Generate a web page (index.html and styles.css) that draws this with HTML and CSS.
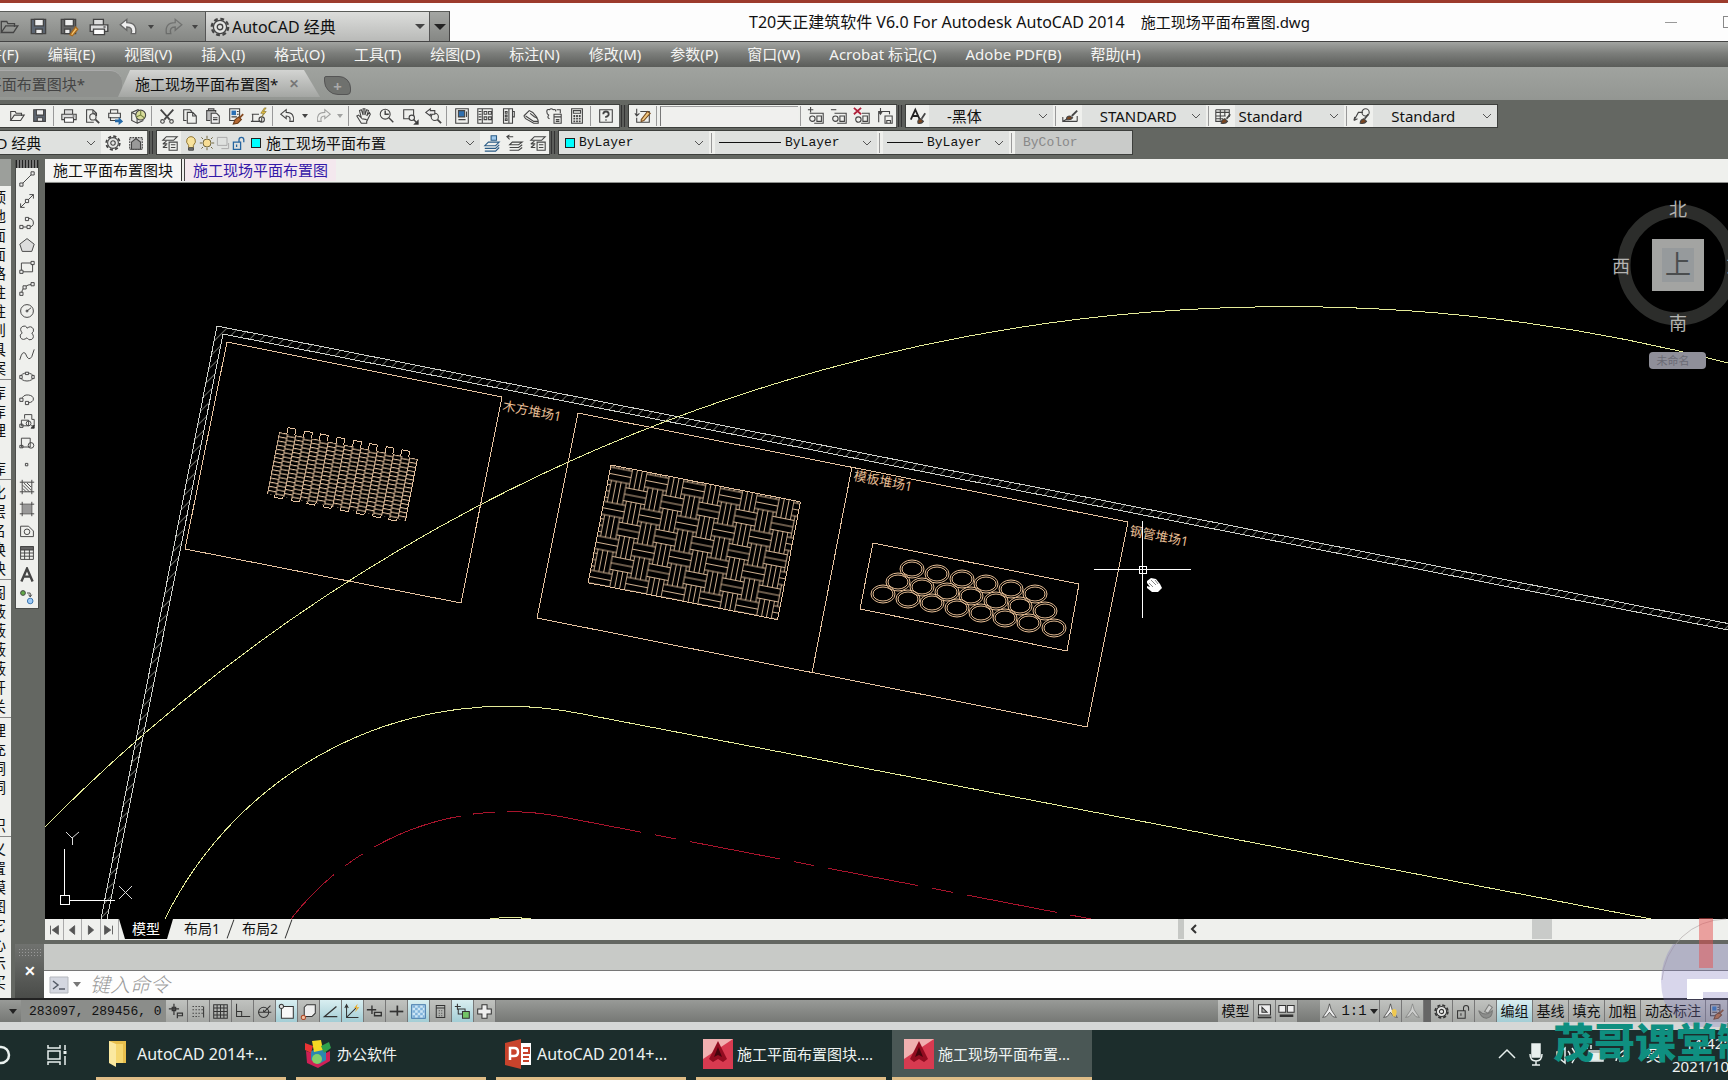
FILE: index.html
```html
<!DOCTYPE html>
<html lang="zh-CN">
<head>
<meta charset="utf-8">
<title>T20天正建筑软件 V6.0 For Autodesk AutoCAD 2014</title>
<link rel="stylesheet" href="styles.css">
</head>
<body>
<svg class="defs" aria-hidden="true">
  <symbol id="new" viewBox="0 0 20 20"><path d="M5 3h7l4 4v10H5zM12 3v4h4"/></symbol>
  <symbol id="open" viewBox="0 0 20 20"><path d="M3 15V5h5l1 2h6v3M3 15l4-6h11l-4 6z"/></symbol>
  <symbol id="save" viewBox="0 0 20 20"><path d="M3 3h13v13H3z" fill="#5d6672"/><path d="M6 3h8v6H6zM7 12h6v4H7z" fill="#eee"/></symbol>
  <symbol id="saveas" viewBox="0 0 20 20"><path d="M3 3h13v13H3z" fill="#666"/><path d="M6 3h8v6H6zM6 12h5v4H6z" fill="#eee"/><path d="M11 17l5-7 2 2-5 6z" fill="#f5c26b" stroke="#a66a20"/></symbol>
  <symbol id="print" viewBox="0 0 20 20"><path d="M5 8V3h9v5M2 8h16v6H2z" fill="#ddd"/><path d="M5 12h10v5H5z" fill="#fff"/><path d="M14 10h2"/></symbol>
  <symbol id="preview" viewBox="0 0 20 20"><path d="M12 17H4V3h7l4 4v3M11 3v4h4"/><circle cx="11" cy="11" r="3.5"/><path d="M14 14l4 4" stroke-width="2"/></symbol>
  <symbol id="publish" viewBox="0 0 20 20"><path d="M5 7V3h8v4M3 7h13v5H3zM5 11v4h5"/><path d="M10 14h4v-3l5 5-5 4v-3h-4z" fill="#2469a8" stroke="none"/></symbol>
  <symbol id="cube" viewBox="0 0 20 20"><path d="M3 6l7-3 3 2M3 6l6 3v9l-6-3zM9 18l7-3"/><circle cx="13" cy="9" r="5.5" fill="#d9dc9b"/><path d="M13 4v5l4 3M13 9l-5 2" stroke="#74843e"/></symbol>
  <symbol id="cut" viewBox="0 0 20 20"><path d="M3 3l10 11M17 3L7 14" stroke-width="2"/><circle cx="5" cy="16" r="2"/><circle cx="15" cy="16" r="2"/></symbol>
  <symbol id="copy" viewBox="0 0 20 20"><path d="M6 15H3V3h7l2 2M7 6h6l4 4v8H7zM13 6v4h4"/></symbol>
  <symbol id="paste" viewBox="0 0 20 20"><path d="M7 15H3V4h10v2M5 4V2h6v2" fill="#bbb"/><path d="M8 7h6l3 3v8H8z" fill="#eee"/><path d="M10 12h5M10 14h5"/></symbol>
  <symbol id="match" viewBox="0 0 20 20"><path d="M3 2h11v13H3z"/><path d="M5 4h5v5H5z" fill="#2a70b5" stroke="none"/><path d="M11 5h2M11 8h2M5 11h6"/><path d="M9 14l4-3 3 3-4 4-5 1z" fill="#b56832" stroke="#6b3c18"/><path d="M14 12l4-4" stroke="#854a20" stroke-width="2"/></symbol>
  <symbol id="blocked" viewBox="0 0 20 20"><path d="M2 8h8M3 8v8h10v-4M1 16h5"/><circle cx="13" cy="14" r="3"/><path d="M16 1l-4 6h3l-2 4 5-6h-3l3-4z" fill="#e8c33f" stroke="#7a6b28" stroke-width=".7"/></symbol>
  <symbol id="undo" viewBox="0 0 20 20"><path d="M2 8l6-5v3c7 0 9 4 8 10h-4c1-4 0-6-4-6v3z"/></symbol>
  <symbol id="redo" viewBox="0 0 20 20"><path d="M18 8l-6-5v3C5 6 3 10 4 16h4c-1-4 0-6 4-6v3z"/></symbol>
  <symbol id="pan" viewBox="0 0 20 20"><path d="M7 18L2 10l2-1 3 3L5 4l2-1 2 6V2h2v7l2-6 2 1-2 6 3-4 1 2-4 8v2zM8 13l5 1"/></symbol>
  <symbol id="zoom" viewBox="0 0 20 20"><circle cx="8" cy="8" r="5.500"/><path d="M8 4v4h4M12 12l5 5" stroke-width="1.600"/></symbol>
  <symbol id="zoomwin" viewBox="0 0 20 20"><path d="M9 13H3V3h11v7"/><circle cx="12" cy="12" r="3"/><path d="M14 14l3 3" stroke-width="1.600"/><path d="M19 15v4h-4z" fill="#222"/></symbol>
  <symbol id="zoomprev" viewBox="0 0 20 20"><circle cx="12" cy="11" r="4"/><path d="M15 14l4 4" stroke-width="2"/><path d="M2 6l5-4v2h5v4H7v2z" fill="#eee"/></symbol>
  <symbol id="props" viewBox="0 0 20 20"><path d="M3 2h14v16H3z"/><path d="M6 4h7v7H6z" fill="#2f6fae"/><path d="M6 14h8M15 5v6"/></symbol>
  <symbol id="center" viewBox="0 0 20 20"><path d="M2 2h16v16H2zM7 2v16M9 5h3v3H9zM14 5h3v3h-3zM9 11h3v3H9zM14 11h3v3h-3zM3 5h3M3 8h3M3 11h3M3 14h3"/></symbol>
  <symbol id="toolpal" viewBox="0 0 20 20"><path d="M5 2h10v16H5zM11 2v16M7 5h2v2H7zM7 9h2v2H7zM7 13h2v2H7zM15 5h2v6h-2"/></symbol>
  <symbol id="sheets" viewBox="0 0 20 20"><path d="M2 10l6-6 4 2 5 6M4 10l9 6h5q0-4-4-5l-5-4M2 10l2 3 9 5h5v-2"/></symbol>
  <symbol id="markup" viewBox="0 0 20 20"><path d="M2 5q0-3 3-2 2-2 4 0 3-1 3 2M2 5q0 3 2 4-2 3 1 4M10 8h8v10h-8zM10 11h8M12 14h4M12 16h4M13 3h4v4"/></symbol>
  <symbol id="calc" viewBox="0 0 20 20"><path d="M4 2h12v16H4zM6 4h8v3H6z"/><path d="M6 10h8M6 13h8M6 16h8" stroke-dasharray="2 1" stroke-width="2"/></symbol>
  <symbol id="help" viewBox="0 0 20 20"><path d="M3 3h14v14H3z"/><path d="M7 8q0-3 3-3t3 3q0 2-3 3v1M10 14v1" stroke-width="2"/></symbol>
  <symbol id="edit" viewBox="0 0 20 20"><path d="M3 2v8M1 7l2 3 3-3M7 5h10v12H3v-5"/><path d="M8 14l7-9 3 2-7 8-3 1z" fill="#f1c77c" stroke="#774b20"/></symbol>
  <symbol id="gplus" viewBox="0 0 20 20"><path d="M1 3h6M4 0v6"/><circle cx="6" cy="13" r="3"/><path d="M3 7h15v11H8M11 10h5v6h-5z"/></symbol>
  <symbol id="gminus" viewBox="0 0 20 20"><path d="M1 3h6"/><circle cx="6" cy="13" r="3"/><path d="M5 7h13v11H8M11 10h5v6h-5z"/></symbol>
  <symbol id="gdel" viewBox="0 0 20 20"><path d="M1 1l8 7M9 1L1 8" stroke="#b0203a" stroke-width="2"/><circle cx="6" cy="14" r="3"/><path d="M10 7h8v11H9M11 10h5v6h-5z"/></symbol>
  <symbol id="gsave" viewBox="0 0 20 20"><path d="M3 17V5h12v3M5 1v6M3 5l2 3 2-3M10 10h8v8h-8zM12 15h4v3h-4z"/></symbol>
  <symbol id="style" viewBox="0 0 20 20"><path d="M2 14L7 3l5 11M4 10h6" stroke="#222" stroke-width="2"/><path d="M10 18q-1-4 3-5l3 3q-2 3-6 2z" fill="#7a451f"/><path d="M14 13l4-6" stroke-width="2"/></symbol>
  <symbol id="dim" viewBox="0 0 20 20"><path d="M2 16h16M2 11v5l5-3M18 16v-6"/><path d="M6 14q0-4 4-4l3 2q-2 3-7 2z" fill="#7a451f"/><path d="M12 10l6-6" stroke-width="2"/></symbol>
  <symbol id="tstyle" viewBox="0 0 20 20"><path d="M2 3h15v8M2 3v13h7M2 6h15M2 10h11M2 13h8M7 3v12M12 3v7" /><path d="M8 18q0-4 4-5l3 3q-2 3-7 2z" fill="#7a451f"/><path d="M14 13l4-5" stroke-width="2"/></symbol>
  <symbol id="ml" viewBox="0 0 20 20"><path d="M1 15L6 6h5M1 15l1-4M1 15l4-2"/><circle cx="14" cy="6" r="4"/><path d="M8 18q0-4 4-5l3 3q-2 3-7 2z" fill="#7a451f"/><path d="M13 13l4-5" stroke-width="2"/></symbol>
  <symbol id="gear" viewBox="0 0 20 20"><circle cx="10" cy="10" r="7.500" stroke-width="2" stroke-dasharray="3.500 2.400"/><circle cx="10" cy="10" r="6" fill="#e4e5e3"/><circle cx="10" cy="10" r="2.500"/></symbol>
  <symbol id="wsave" viewBox="0 0 20 20"><path d="M3 4h14v13H3z" fill="#ccc" stroke-dasharray="2 1"/><path d="M5 9l5-4 5 4v8H5z" fill="#999"/></symbol>
  <symbol id="layers" viewBox="0 0 20 20"><path d="M6 3h12l-4 4H2zM2 11l4-3M2 15l4-3M2 11h5M2 15h5M9 9h9v9H9zM11 12h5M11 15h5"/></symbol>
  <symbol id="lay2" viewBox="0 0 20 20"><path d="M6 9h12l-4 4H2zM2 16h12l4-4M2 19h12l4-4" stroke="#2b5c86"/><path d="M9 2h6v5H9z" fill="#9ec9ed" stroke="#2b5c86"/></symbol>
  <symbol id="lay3" viewBox="0 0 20 20"><path d="M7 9h11l-4 3H4zM4 15h10l4-3M4 18h10l4-3M1 3h7M4 1L1 3l3 3"/></symbol>
  <symbol id="bulb" viewBox="0 0 20 20"><path d="M7 13q-4-4-2-8 2-3 5-3t5 3q2 4-2 8v3H7z" fill="#f8e29b" stroke="#8e7432"/><path d="M7 16h6v3H7z" fill="#777"/></symbol>
  <symbol id="sun" viewBox="0 0 20 20"><circle cx="10" cy="10" r="5" fill="#f7dd94" stroke="#6d6239"/><path d="M10 1v3M10 16v3M1 10h3M16 10h3M3 3l2 2M15 15l2 2M17 3l-2 2M5 15l-2 2" stroke="#6d6239"/></symbol>
  <symbol id="vp" viewBox="0 0 20 20"><path d="M3 3h12v10H3zM8 17h9v-7" stroke="#aaa"/></symbol>
  <symbol id="lock" viewBox="0 0 20 20"><path d="M3 9h9v9H3zM10 9V6q0-3 3-3t3 3v3M7 12v3"/></symbol>
  <symbol id="line" viewBox="0 0 20 20"><path d="M3 17L17 3"/><path d="M1 15h4v4H1zM15 1h4v4h-4z" fill="#eee"/></symbol>
  <symbol id="xline" viewBox="0 0 20 20"><path d="M2 18L18 2M2 13v5h5M13 2h5v5"/><path d="M8 8h4v4H8z" fill="#eee"/></symbol>
  <symbol id="pline" viewBox="0 0 20 20"><path d="M3 15h9q6 0 6-5 0-6-7-6"/><path d="M1 13h4v4H1zM10 13h4v4h-4zM8 3h4v4H8z" fill="#eee"/></symbol>
  <symbol id="poly" viewBox="0 0 20 20"><path d="M10 2l9 7-3 9H4L1 9z" fill="#ddd"/></symbol>
  <symbol id="rect" viewBox="0 0 20 20"><path d="M3 5h14v11H3z"/><path d="M1 14h4v4H1zM15 3h4v4h-4z" fill="#eee"/></symbol>
  <symbol id="arc" viewBox="0 0 20 20"><path d="M3 16Q4 5 17 4"/><path d="M1 14h4v4H1zM15 2h4v4h-4zM5 6h4v4H5z" fill="#eee"/></symbol>
  <symbol id="circle" viewBox="0 0 20 20"><circle cx="10" cy="10" r="8"/><path d="M10 10l5-4M9 9h2v2H9z"/></symbol>
  <symbol id="iso" viewBox="0 0 20 20"><path d="M2 9q3 9 9 9 7-1 7-9-8 8-16 0z" fill="#666"/><path d="M9 10l5-8 4 3-5 7z" fill="#eee"/></symbol>
  <symbol id="cloud" viewBox="0 0 20 20"><path d="M4 10Q0 5 4 2q5-2 6 2 5-4 8 1 1 4-2 5 4 5 0 8-4 2-6-2-5 4-8 0-2-4 2-6z"/></symbol>
  <symbol id="spline" viewBox="0 0 20 20"><path d="M1 16Q4 4 8 8q4 11 8 4l3-9"/></symbol>
  <symbol id="ellipse" viewBox="0 0 20 20"><ellipse cx="10" cy="10" rx="8" ry="5"/><path d="M1 8h3v4H1zM16 8h3v4h-3zM8 4h4v3H8z" fill="#eee"/></symbol>
  <symbol id="earc" viewBox="0 0 20 20"><path d="M3 11q2-7 9-6 6 1 6 5t-7 5"/><path d="M1 9h4v4H1zM8 13h4v4H8z" fill="#eee"/></symbol>
  <symbol id="insert" viewBox="0 0 20 20"><path d="M7 7V2h9v6h3v8h-4M3 9h9v7H3zM1 14h4v4H1z"/><circle cx="12" cy="13" r="3"/><path d="M19 15v4h-4z" fill="#222"/></symbol>
  <symbol id="mkblock" viewBox="0 0 20 20"><path d="M3 4h11v11H3zM1 13h4v3H1z"/><circle cx="15" cy="13" r="3.500"/></symbol>
  <symbol id="point" viewBox="0 0 20 20"><path d="M8 8h3v3H8z"/></symbol>
  <symbol id="hatch" viewBox="0 0 20 20"><path d="M4 1v18M16 1v18M1 4h18M1 16h18M5 12l4 4M5 8l8 8M6 5l9 9M10 5l5 5"/></symbol>
  <symbol id="grad" viewBox="0 0 20 20"><path d="M5 5h10v10H5z" fill="#999" stroke="none"/><path d="M4 1v18M16 1v18M1 4h18M1 16h18"/></symbol>
  <symbol id="region" viewBox="0 0 20 20"><path d="M2 4h10l6 6v7H2z"/><circle cx="10" cy="11" r="3.500"/></symbol>
  <symbol id="table" viewBox="0 0 20 20"><path d="M2 2h16v16H2zM2 6h16M2 10h16M2 14h16M7 6v12M13 6v12"/><path d="M2 2h16v4H2z" fill="#666"/></symbol>
  <symbol id="mtext" viewBox="0 0 20 20"><path d="M3 18L10 2l7 16M6 12h8" stroke-width="3"/></symbol>
  <symbol id="addsel" viewBox="0 0 20 20"><circle cx="5" cy="5" r="3" fill="#62aa46"/><circle cx="14" cy="15" r="3.500" fill="#9fcaf5" stroke="#3673af"/><path d="M10 5h4v4M12 7l2 3 2-3"/></symbol>
  <symbol id="infer" viewBox="0 0 20 20"><path d="M7 1v13M1 7h12M5 5h4v4H5zM11 18v-6h6v3h-6" stroke-width="1.400"/></symbol>
  <symbol id="snap" viewBox="0 0 20 20"><path d="M3 4h12M3 8h12M3 12h12M3 16h8" stroke-dasharray="1.500 2"/><path d="M16 4v13"/></symbol>
  <symbol id="grid" viewBox="0 0 20 20"><path d="M2 2h16v16H2zM2 6h16M2 10h16M2 14h16M6 2v16M10 2v16M14 2v16"/></symbol>
  <symbol id="ortho" viewBox="0 0 20 20"><path d="M3 1v15h16M3 10h6v6"/></symbol>
  <symbol id="polar" viewBox="0 0 20 20"><circle cx="9" cy="11" r="6"/><path d="M3 11h15M9 11l8-8M9 8v3"/></symbol>
  <symbol id="osnap" viewBox="0 0 20 20"><path d="M4 4h14v14H4z" fill="#f7f7f7"/><circle cx="4" cy="4" r="2.500" fill="#ddd"/></symbol>
  <symbol id="osnap3" viewBox="0 0 20 20"><path d="M5 5l3-3h10v10l-4 4H5z" fill="#eee"/><circle cx="4" cy="17" r="2.500" fill="#f3c0a0" stroke="#ae4929"/></symbol>
  <symbol id="angle" viewBox="0 0 20 20"><path d="M17 4L3 16h15" stroke-width="1.600"/></symbol>
  <symbol id="ducs" viewBox="0 0 20 20"><path d="M3 3v14h14M3 17L14 6M1 6l2-4 2 4"/><path d="M16 1l-4 5h3l-2 5 5-6h-3z" fill="#ebac27" stroke="none"/></symbol>
  <symbol id="dyn" viewBox="0 0 20 20"><path d="M1 8h11M7 3v10M10 11h8v4h-8z" stroke-width="1.600"/></symbol>
  <symbol id="lwt" viewBox="0 0 20 20"><path d="M2 10h16" stroke-width="2"/><path d="M11 3v12" stroke-width="2"/></symbol>
  <symbol id="trans" viewBox="0 0 20 20"><path d="M2 2h16v16H2z" fill="#cde6f6" stroke="#3d72a7"/><path d="M3 4h14M3 10h14M3 16h14" stroke="#7fb2da" stroke-dasharray="3 3" stroke-width="3"/><path d="M6 7h11M6 13h11" stroke="#7fb2da" stroke-dasharray="3 3" stroke-width="3"/></symbol>
  <symbol id="qp" viewBox="0 0 20 20"><path d="M5 3h10v14H5zM5 6h10M8 9h1M11 9h1M8 12h1M11 12h1M8 15h1M11 15h1"/></symbol>
  <symbol id="sc" viewBox="0 0 20 20"><path d="M1 4h7M4 1v7M5 7h8v6H5z"/><path d="M10 10h8v8h-8z" fill="#73c467"/></symbol>
  <symbol id="am" viewBox="0 0 20 20"><path d="M7 2h6v5h5v6h-5v5H7v-5H2V7h5z" fill="#eee"/></symbol>
  <symbol id="model" viewBox="0 0 20 20"><path d="M3 2h14v12H3zM7 5v6h6z" fill="#eee"/><path d="M2 17h16" stroke-width="2"/></symbol>
  <symbol id="views" viewBox="0 0 20 20"><path d="M1 3h8v8H1zM11 3h8v8h-8z" fill="#eee"/><path d="M2 15h16" stroke-width="3"/></symbol>
  <symbol id="anno" viewBox="0 0 20 20"><path d="M10 1l2 7 6 9-4-1-4-5-4 5-4 1 6-9z" fill="#eee" stroke-width=".8"/></symbol>
  <symbol id="annobulb" viewBox="0 0 20 20"><path d="M10 1l2 7 6 9-4-1-4-5-4 5-4 1 6-9z" fill="#eee" stroke-width=".8"/><path d="M12 12q-2-4 2-5 4 0 3 5l-1 4h-3z" fill="#f0c94f" stroke="none"/></symbol>
  <symbol id="acad" viewBox="0 0 30 30"><path d="M0 0h30v30H0z" fill="#d83a50" stroke="none"/><path d="M0 0h30L0 20z" fill="#f0b0b0" stroke="none"/><path d="M15 2l9 18-4 3-5-3-5 3-4-3z" fill="#920c20" stroke="none"/><path d="M15 8l-4 10 4-2 4 2z" fill="#46040d" stroke="none"/></symbol>
</svg>

<div class="app">
  <header class="titlebar">
    <div class="qat">
      <button class="qb" aria-label="打开"><svg class="ic"><use href="#open"/></svg></button>
      <button class="qb" aria-label="保存"><svg class="ic"><use href="#save"/></svg></button>
      <button class="qb" aria-label="另存为"><svg class="ic"><use href="#saveas"/></svg></button>
      <button class="qb" aria-label="打印"><svg class="ic"><use href="#print"/></svg></button>
      <button class="qb light" aria-label="放弃"><svg class="ic"><use href="#undo"/></svg></button>
      <button class="caret" aria-label="放弃列表"></button>
      <button class="qb dim" aria-label="重做"><svg class="ic"><use href="#redo"/></svg></button>
      <button class="caret" aria-label="重做列表"></button>
      <div class="wscombo"><svg class="ic"><use href="#gear"/></svg><select aria-label="工作空间"><option>AutoCAD 经典</option></select><i class="tri"></i></div>
      <button class="qatmore" aria-label="自定义快速访问工具栏"><i class="tri big"></i></button>
    </div>
    <h1>T20天正建筑软件 V6.0 For Autodesk AutoCAD 2014<span>施工现场平面布置图.dwg</span></h1>
    <button class="winmin" aria-label="最小化"></button>
    <button class="winmax" aria-label="最大化"></button>
  </header>

  <nav class="menubar">
    <a href="#">文件(F)</a><a href="#">编辑(E)</a><a href="#">视图(V)</a><a href="#">插入(I)</a><a href="#">格式(O)</a><a href="#">工具(T)</a><a href="#">绘图(D)</a><a href="#">标注(N)</a><a href="#">修改(M)</a><a href="#">参数(P)</a><a href="#">窗口(W)</a><a href="#">Acrobat 标记(C)</a><a href="#">Adobe PDF(B)</a><a href="#">帮助(H)</a>
  </nav>

  <div class="filetabs">
    <button class="ftab">施工平面布置图块*</button>
    <button class="ftab active">施工现场平面布置图*<b>✕</b></button>
    <button class="fnew" aria-label="新建">+</button>
  </div>

  <div class="toolbars">
    <div class="trow">
      <div class="panel std">
        <button class="tb" aria-label="新建"><svg class="ic"><use href="#new"/></svg></button>
        <button class="tb" aria-label="打开"><svg class="ic"><use href="#open"/></svg></button>
        <button class="tb" aria-label="保存"><svg class="ic"><use href="#save"/></svg></button>
        <i class="sep"></i>
        <button class="tb" aria-label="打印"><svg class="ic"><use href="#print"/></svg></button>
        <button class="tb" aria-label="打印预览"><svg class="ic"><use href="#preview"/></svg></button>
        <button class="tb" aria-label="发布"><svg class="ic"><use href="#publish"/></svg></button>
        <button class="tb" aria-label="三维打印"><svg class="ic"><use href="#cube"/></svg></button>
        <i class="sep"></i>
        <button class="tb" aria-label="剪切"><svg class="ic"><use href="#cut"/></svg></button>
        <button class="tb" aria-label="复制"><svg class="ic"><use href="#copy"/></svg></button>
        <button class="tb" aria-label="粘贴"><svg class="ic"><use href="#paste"/></svg></button>
        <button class="tb" aria-label="特性匹配"><svg class="ic"><use href="#match"/></svg></button>
        <button class="tb" aria-label="块编辑器"><svg class="ic"><use href="#blocked"/></svg></button>
        <i class="sep"></i>
        <button class="tb" aria-label="放弃"><svg class="ic"><use href="#undo"/></svg></button>
        <button class="caret" aria-label="放弃列表"></button>
        <button class="tb dim" aria-label="重做"><svg class="ic"><use href="#redo"/></svg></button>
        <button class="caret dim" aria-label="重做列表"></button>
        <i class="sep"></i>
        <button class="tb" aria-label="平移"><svg class="ic"><use href="#pan"/></svg></button>
        <button class="tb" aria-label="实时缩放"><svg class="ic"><use href="#zoom"/></svg></button>
        <button class="tb" aria-label="窗口缩放"><svg class="ic"><use href="#zoomwin"/></svg></button>
        <button class="tb" aria-label="缩放上一个"><svg class="ic"><use href="#zoomprev"/></svg></button>
        <i class="sep"></i>
        <button class="tb" aria-label="特性"><svg class="ic"><use href="#props"/></svg></button>
        <button class="tb" aria-label="设计中心"><svg class="ic"><use href="#center"/></svg></button>
        <button class="tb" aria-label="工具选项板"><svg class="ic"><use href="#toolpal"/></svg></button>
        <button class="tb" aria-label="图纸集"><svg class="ic"><use href="#sheets"/></svg></button>
        <button class="tb" aria-label="标记集"><svg class="ic"><use href="#markup"/></svg></button>
        <button class="tb" aria-label="计算器"><svg class="ic"><use href="#calc"/></svg></button>
        <i class="sep"></i>
        <button class="tb" aria-label="帮助"><svg class="ic"><use href="#help"/></svg></button>
      </div>
      <i class="grip"></i>
      <div class="panel grp">
        <button class="tb" aria-label="参照编辑"><svg class="ic"><use href="#edit"/></svg></button>
        <i class="sep"></i>
        <input class="refname" type="text" aria-label="参照名">
        <i class="sep"></i>
        <button class="tb" aria-label="添加到工作集"><svg class="ic"><use href="#gplus"/></svg></button>
        <button class="tb" aria-label="从工作集删除"><svg class="ic"><use href="#gminus"/></svg></button>
        <button class="tb" aria-label="关闭参照"><svg class="ic"><use href="#gdel"/></svg></button>
        <button class="tb" aria-label="保存参照"><svg class="ic"><use href="#gsave"/></svg></button>
      </div>
      <i class="grip"></i>
      <div class="panel styles">
        <button class="tb" aria-label="文字样式"><svg class="ic"><use href="#style"/></svg></button>
        <select class="combo inset" aria-label="文字样式列表"><option>-黑体</option></select>
        <i class="sep"></i>
        <button class="tb" aria-label="标注样式"><svg class="ic"><use href="#dim"/></svg></button>
        <select class="combo inset" aria-label="标注样式列表"><option>STANDARD</option></select>
        <i class="sep"></i>
        <button class="tb" aria-label="表格样式"><svg class="ic"><use href="#tstyle"/></svg></button>
        <select class="combo" aria-label="表格样式列表"><option>Standard</option></select>
        <i class="sep"></i>
        <button class="tb" aria-label="多重引线样式"><svg class="ic"><use href="#ml"/></svg></button>
        <select class="combo inset" aria-label="多重引线样式列表"><option>Standard</option></select>
      </div>
    </div>

    <div class="trow">
      <div class="panel wsp">
        <select class="combo" aria-label="工作空间"><option>AutoCAD 经典</option></select>
        <button class="tb" aria-label="工作空间设置"><svg class="ic"><use href="#gear"/></svg></button>
        <button class="tb" aria-label="我的工作空间"><svg class="ic"><use href="#wsave"/></svg></button>
      </div>
      <i class="grip"></i>
      <div class="panel lay">
        <button class="tb" aria-label="图层特性"><svg class="ic"><use href="#layers"/></svg></button>
        <div class="layercombo">
          <svg class="sm"><use href="#bulb"/></svg><svg class="sm"><use href="#sun"/></svg><svg class="sm"><use href="#vp"/></svg><svg class="sm blue"><use href="#lock"/></svg><i class="swatch"></i>
          <select class="combo" aria-label="图层"><option>施工现场平面布置</option></select>
        </div>
        <button class="tb" aria-label="置为当前"><svg class="ic"><use href="#lay2"/></svg></button>
        <button class="tb" aria-label="上一个图层"><svg class="ic"><use href="#lay3"/></svg></button>
        <button class="tb" aria-label="图层状态"><svg class="ic"><use href="#layers"/></svg></button>
      </div>
      <i class="grip"></i>
      <div class="panel prop">
        <div class="pc color"><i class="swatch"></i><select class="combo" aria-label="颜色"><option>ByLayer</option></select></div>
        <i class="sep"></i>
        <div class="pc ltype"><i class="rule"></i><select class="combo" aria-label="线型"><option>ByLayer</option></select></div>
        <i class="sep"></i>
        <div class="pc lweight"><i class="rule"></i><select class="combo" aria-label="线宽"><option>ByLayer</option></select></div>
        <i class="sep"></i>
        <div class="pc pstyle"><select class="combo" aria-label="打印样式" disabled><option>ByColor</option></select></div>
      </div>
    </div>
  </div>

  <main class="workspace">
    <aside class="palette">
      <ul><li>顶</li><li>地</li><li>面</li><li>面</li><li>路</li><li>柱</li><li>柱</li><li>到</li><li>具</li><li>案</li></ul>
      <ul><li>库</li><li>库</li><li>理</li><li></li><li>库</li></ul>
      <ul><li>化</li><li>层</li><li>名</li><li>换</li><li>块</li></ul>
      <ul><li>阁</li><li>蔽</li><li>蔽</li><li>蔽</li><li>蔽</li><li>开</li><li>关</li></ul>
      <ul><li>理</li><li>充</li><li>洞</li><li>洞</li><li></li><li>识</li></ul>
      <ul><li>义</li><li>置</li><li>模</li><li>图</li><li>它</li><li>心</li><li>示</li><li>买</li></ul>
    </aside>
    <div class="work">
      <div class="upper">
        <div class="drawbar">
          <i class="hgrip"></i>
          <button aria-label="直线"><svg class="ic"><use href="#line"/></svg></button>
          <button aria-label="构造线"><svg class="ic"><use href="#xline"/></svg></button>
          <button aria-label="多段线"><svg class="ic"><use href="#pline"/></svg></button>
          <button aria-label="多边形"><svg class="ic"><use href="#poly"/></svg></button>
          <button aria-label="矩形"><svg class="ic"><use href="#rect"/></svg></button>
          <button aria-label="圆弧"><svg class="ic"><use href="#arc"/></svg></button>
          <button aria-label="圆"><svg class="ic"><use href="#circle"/></svg></button>
          <button aria-label="修订云线"><svg class="ic"><use href="#cloud"/></svg></button>
          <button aria-label="样条曲线"><svg class="ic"><use href="#spline"/></svg></button>
          <button aria-label="椭圆"><svg class="ic"><use href="#ellipse"/></svg></button>
          <button aria-label="椭圆弧"><svg class="ic"><use href="#earc"/></svg></button>
          <button aria-label="插入块"><svg class="ic"><use href="#insert"/></svg></button>
          <button aria-label="创建块"><svg class="ic"><use href="#mkblock"/></svg></button>
          <button aria-label="点"><svg class="ic"><use href="#point"/></svg></button>
          <button aria-label="图案填充"><svg class="ic"><use href="#hatch"/></svg></button>
          <button aria-label="渐变色"><svg class="ic"><use href="#grad"/></svg></button>
          <button aria-label="面域"><svg class="ic"><use href="#region"/></svg></button>
          <button aria-label="表格"><svg class="ic"><use href="#table"/></svg></button>
          <button aria-label="多行文字"><svg class="ic"><use href="#mtext"/></svg></button>
          <button aria-label="添加选定对象"><svg class="ic"><use href="#addsel"/></svg></button>
        </div>
        <div class="doc">
          <div class="doctabs"><button>施工平面布置图块</button><button class="on">施工现场平面布置图</button></div>
          <div class="canvas">
            <svg class="drawing" role="img" aria-label="施工现场平面布置图">
              <defs>
                <pattern id="wallhatch" width="8" height="8" patternUnits="userSpaceOnUse" patternTransform="rotate(45)"><path d="M0 0v8" stroke="#8a8d87" stroke-width="1.500"/></pattern>
                <pattern id="timber" width="16.600" height="4.200" patternUnits="userSpaceOnUse"><path d="M0 .5h8.300M8.300 2.600h8.300M.5 0v4.200M8.800 0v4.200" stroke="#e6c3a0" stroke-width="1" fill="none"/></pattern>
                <pattern id="weave" width="37.400" height="35" patternUnits="userSpaceOnUse"><path d="M0 2h22M0 8.500h22M0 15h22M22 0v19.500M27 0v19.500M32 0v19.500M37 0v19.500M22 32.500v2.500M27 32.500v2.500M32 32.500v2.500M37 32.500v2.500M3.300 15v20M8.300 15v20M13.300 15v20M18.700 15v20M3.300 0v2M8.300 0v2M13.300 0v2M18.700 0v2M18.700 19.500h18.700M18.700 26h18.700M18.700 32.500h18.700M0 19.500h3.300M0 26h3.300M0 32.500h3.300" stroke="#e6c3a0" stroke-width=".9" fill="none"/></pattern>
                <g id="pipe"><ellipse rx="12" ry="9"/><ellipse rx="10" ry="7"/></g>
              </defs>
              <g transform="translate(-45 -183)" fill="none" shape-rendering="crispEdges">
                <path d="M101 919L217 326 1728 623.500V630.500L223 334 107 919z" fill="url(#wallhatch)" stroke="none" shape-rendering="auto"/>
                <path class="wall" d="M101 919L217 326 1728 623.500M107 919L223 334 1728 630"/>
                <path class="yel" d="M45 827A1745 1745 0 0 1 1728 363M165 919A380 380 0 0 1 580 713.500L1651 919M490 919q20-3 41 0"/>
                <path class="red bend" d="M560 816.500A275 275 0 0 0 291 919"/>
                <path class="red run" d="M560 816.500L1091 919"/>
                <path class="tan" d="M227 342L502 397 461 603 185 549zM578 413L1128 522 1087 727 537 618zM852 467L812 673M873 543L1079 584 1067 651 860 609z"/>
                <g transform="translate(279 432) rotate(11)">
                  <rect width="141" height="63" fill="url(#timber)"/>
                  <path class="tan" d="M8 0v-6h8v6M25 0v-6h8v6M41 0v-6h8v6M58 0v-6h8v6M75 0v-6h8v6M91 0v-6h8v6M108 0v-6h8v6M124 0v-6h8v6M8 63v2h8v-2M25 63v2h8v-2M41 63v2h8v-2M58 63v2h8v-2M75 63v2h8v-2M91 63v2h8v-2M108 63v2h8v-2M124 63v2h8v-2M141 0v63"/>
                </g>
                <g transform="translate(611 465) rotate(11)"><rect class="tan" width="193" height="120" fill="url(#weave)"/></g>
                <g class="pipes" transform="translate(840 460)" shape-rendering="auto">
                  <use href="#pipe" x="43" y="134"/><use href="#pipe" x="68" y="139"/><use href="#pipe" x="92" y="143"/><use href="#pipe" x="117" y="148"/><use href="#pipe" x="141" y="153"/><use href="#pipe" x="165" y="158"/><use href="#pipe" x="189" y="163"/><use href="#pipe" x="214" y="168"/>
                  <use href="#pipe" x="58" y="122"/><use href="#pipe" x="82" y="127"/><use href="#pipe" x="107" y="132"/><use href="#pipe" x="131" y="136"/><use href="#pipe" x="156" y="141"/><use href="#pipe" x="180" y="146"/><use href="#pipe" x="205" y="151"/>
                  <use href="#pipe" x="72" y="109"/><use href="#pipe" x="97" y="114"/><use href="#pipe" x="122" y="119"/><use href="#pipe" x="146" y="124"/><use href="#pipe" x="171" y="129"/><use href="#pipe" x="195" y="134"/>
                </g>
                <text class="lab" transform="translate(502 410) rotate(11)">木方堆场1</text>
                <text class="lab" transform="translate(853 480) rotate(11)">模板堆场1</text>
                <text class="lab" transform="translate(1129 535) rotate(11)">钢管堆场1</text>
                <path class="white" d="M1094 569.500h97M1142.500 521v97M1139 566h7v7h-7z"/>
                <g shape-rendering="auto"><path d="M1147 581l4-3 5 1 4 5 2 4-4 4h-6l-5-4v-2l3 1-3-4z" fill="#fff"/><path d="M1149 583l4 4M1151 580l5 5M1155 580l3 4" stroke="#555" stroke-width=".7"/></g>
                <path class="white" d="M64.500 849v46M70 900.500h45M60 895.500h9v9h-9z"/>
                <path class="white thin" d="M66 832l6 6 7-6M72.500 838v7M119 886l13 13M132 886l-13 13" shape-rendering="auto"/>
              </g>
            </svg>
            <svg class="viewcube" width="110" height="190" aria-label="ViewCube">
              <circle cx="60" cy="72" r="54" fill="none" stroke="#2c2d2b" stroke-width="13"/>
              <path d="M34 46h52v52H34z" fill="#a3a4a2"/><path d="M44 55h32v34H44z" fill="#969a9c"/>
              <g class="dir"><text x="60" y="23">北</text><text x="3" y="80">西</text><text x="117" y="80">东</text><text x="60" y="137">南</text></g>
              <text class="top" x="60" y="81">上</text>
              <rect x="31" y="159" width="57" height="17" rx="4" fill="#8f8f99"/><text class="wcs" x="55" y="172">未命名</text>
            </svg>
          </div>
          <div class="layout">
            <div class="nav"><button aria-label="第一个"><svg viewBox="0 0 16 16"><path d="M4 3v10M13 3L6 8l7 5z"/></svg></button><button aria-label="上一个"><svg viewBox="0 0 16 16"><path d="M11 3L5 8l6 5z"/></svg></button><button aria-label="下一个"><svg viewBox="0 0 16 16"><path d="M5 3l6 5-6 5z"/></svg></button><button aria-label="最后一个"><svg viewBox="0 0 16 16"><path d="M12 3v10M3 3l7 5-7 5z"/></svg></button></div>
            <button class="lt on">模型</button><button class="lt">布局1</button><button class="lt">布局2</button>
            <div class="hscroll"><i class="split"></i><button aria-label="向左滚动"><svg viewBox="0 0 10 12"><path d="M7 2L3 6l4 4"/></svg></button><i class="thumb"></i></div>
          </div>
        </div>
      </div>
      <div class="command">
        <div class="cmdgrip"><i></i><button aria-label="关闭">✕</button></div>
        <div class="cmdmain">
          <div class="history"></div>
          <label class="prompt"><svg width="26" height="18" viewBox="0 0 26 18"><path d="M1 1h18v16H1z" fill="#d4d7e0" stroke="#b4b7bd"/><path d="M4 5l5 4-5 4M10 13h6" fill="none" stroke="#555b66" stroke-width="1.500"/></svg><i class="tri"></i><input type="text" placeholder="键入命令" aria-label="命令行"></label>
        </div>
      </div>
    </div>
  </main>

  <footer class="status">
    <i class="tri"></i>
    <output class="coords">283097, 289456, 0</output>
    <div class="sgroup">
      <button aria-label="推断约束"><svg class="ic"><use href="#infer"/></svg></button>
      <button aria-label="捕捉"><svg class="ic"><use href="#snap"/></svg></button>
      <button aria-label="栅格"><svg class="ic"><use href="#grid"/></svg></button>
      <button aria-label="正交"><svg class="ic"><use href="#ortho"/></svg></button>
      <button aria-label="极轴"><svg class="ic"><use href="#polar"/></svg></button>
      <button class="on" aria-label="对象捕捉"><svg class="ic"><use href="#osnap"/></svg></button>
      <button aria-label="三维对象捕捉"><svg class="ic"><use href="#osnap3"/></svg></button>
      <button class="on" aria-label="对象追踪"><svg class="ic"><use href="#angle"/></svg></button>
      <button class="on" aria-label="动态UCS"><svg class="ic"><use href="#ducs"/></svg></button>
      <button aria-label="动态输入"><svg class="ic"><use href="#dyn"/></svg></button>
      <button aria-label="线宽"><svg class="ic"><use href="#lwt"/></svg></button>
      <button class="on" aria-label="透明度"><svg class="ic"><use href="#trans"/></svg></button>
      <button aria-label="快捷特性"><svg class="ic"><use href="#qp"/></svg></button>
      <button class="on" aria-label="选择循环"><svg class="ic"><use href="#sc"/></svg></button>
      <button aria-label="注释监视器"><svg class="ic"><use href="#am"/></svg></button>
    </div>
    <div class="sgroup right">
      <button class="txt">模型</button>
      <button aria-label="图纸"><svg class="ic"><use href="#model"/></svg></button>
      <button aria-label="快速查看"><svg class="ic"><use href="#views"/></svg></button>
      <i class="gap"></i>
      <button class="scale"><svg class="ic"><use href="#anno"/></svg>1:1<i class="tri"></i></button>
      <button aria-label="注释可见性"><svg class="ic"><use href="#annobulb"/></svg></button>
      <button aria-label="自动缩放"><svg class="ic dim"><use href="#anno"/></svg></button>
      <i class="gap thin"></i>
      <button aria-label="切换工作空间"><svg class="ic"><use href="#gear"/></svg></button>
      <button aria-label="锁定"><svg class="ic"><use href="#lock"/></svg></button>
      <button aria-label="硬件加速"><svg class="ic dim"><use href="#iso"/></svg></button>
      <button class="txt on">编组</button><button class="txt">基线</button><button class="txt">填充</button><button class="txt">加粗</button><button class="txt wide">动态标注</button>
      <button aria-label="隔离对象"><svg class="ic"><use href="#match"/></svg></button>
    </div>
  </footer>

  <div class="taskbar">
    <button class="cortana" aria-label="搜索"><svg width="20" height="24"><circle cx="6" cy="12" r="8" fill="none" stroke="#e8f0ee" stroke-width="2.500"/></svg></button>
    <button class="tview" aria-label="任务视图"><svg width="22" height="22" viewBox="0 0 22 22" fill="none" stroke="#e8f0ee" stroke-width="1.500"><path d="M2 1v3h12V1M2 7h12v8H2zM2 21v-3h12v3M19 1v5M19 12v9"/><path d="M19 7v3" stroke-width="3"/></svg></button>
    <button class="task latin"><svg viewBox="0 0 30 30"><path d="M6 2h17v22H6z" fill="#e8bf4d"/><path d="M6 2l7 3v23l-7-4z" fill="#fbe9a0"/><path d="M13 5h7v19h-7z" fill="#f5d770"/></svg>AutoCAD 2014+...</button>
    <button class="task"><svg viewBox="0 0 30 30"><path d="M3 12l14 5 10-5v10l-12 7L4 24z" fill="#cf2056"/><path d="M8 12l8-3 7 4v8l-7 4-8-4z" fill="#2b87b0"/><circle cx="14" cy="20" r="5" fill="#83cf6a"/><path d="M9 2l9-1 2 10-9 2z" fill="#f5d923"/><path d="M2 4l8 3-2 7-6-3z" fill="#e93434"/><path d="M18 7l8-4 2 6-7 5z" fill="#30a14c"/></svg>办公软件</button>
    <button class="task latin"><svg viewBox="0 0 30 30"><path d="M14 4h14v22H14z" fill="#fff"/><path d="M2 4l16-4v30L2 26z" fill="#c8432c"/><path d="M7 21V9h4q4 0 4 4t-4 4H7" fill="none" stroke="#fff" stroke-width="2.500"/><path d="M20 9h6v5h-6M20 18h6M20 22h6" fill="none" stroke="#c8432c" stroke-width="2"/></svg>AutoCAD 2014+...</button>
    <button class="task"><svg><use href="#acad"/></svg>施工平面布置图块....</button>
    <button class="task active"><svg><use href="#acad"/></svg>施工现场平面布置...</button>
    <div class="tray">
      <svg width="160" height="28" viewBox="0 0 160 28" fill="none" stroke="#e8f0ee" stroke-width="1.500"><path d="M1 17l8-8 8 8"/><path d="M34 3h8v13h-8z" fill="#e8f0ee"/><path d="M32 13q0 7 6 7t6-7M38 20v4M34 24h8M59 11h3l5-4v15l-5-4h-3zM70 10q4 4 0 9M74 7q6 7 0 15M91 10h14v10H91zM89 4v4M93 4v4M118 20q1-9 12-12M122 21q1-7 8-8M127 21q0-3 3-4"/><path d="M93 12h10v7H93z" fill="#e8f0ee"/></svg>
      <span class="ime">英</span>
      <div class="clock"><span>14:42:</span><span>2021/10</span></div>
    </div>
  </div>

  <div class="mark">
    <svg width="68" height="112" viewBox="0 0 68 112"><path d="M66 1A65 65 0 0 0 2 62" fill="none" stroke="#a8a0a0" stroke-opacity=".6"/><path d="M68 26H13Q-5 52 4 83q8 18 30 26h34z" fill="#827ac0" fill-opacity=".3"/><path d="M39 0h14v50H39z" fill="#e65050" fill-opacity=".5"/><path d="M27 61h41v13H43v7H27z" fill="#fff"/></svg>
    <p>茂哥课堂制</p>
  </div>
</div>
</body>
</html>
```

FILE: styles.css
```css
* { box-sizing: border-box; }
body {
  margin: 0;
  background: #646762;
  color: #111;
  font: 15px/20px "Noto Sans", "Noto Sans CJK SC", sans-serif;
}
button, select, input { font: inherit; color: inherit; margin: 0; padding: 0; border: 0; background: none; border-radius: 0; }
button { display: flex; align-items: center; justify-content: center; flex: none; }
select { appearance: none; outline: 0; }
a { color: inherit; text-decoration: none; }
i { font-style: normal; flex: none; }
.defs { position: absolute; width: 0; height: 0; }
.ic, .sm { width: 18px; height: 18px; fill: none; stroke: #444; stroke-width: 1.2; flex: none; display: block; }
.sm { width: 16px; height: 16px; }
.sm.blue { stroke: #2565a0; stroke-width: 1.6; }
.dim { opacity: .45; }
.tri { border: 4px solid transparent; border-top: 5px solid #222; border-bottom: 0; width: 8px; height: 5px; }
.tri.big { border-width: 6px 6px 0; width: 12px; height: 6px; }

.app { display: flex; flex-direction: column; min-height: 100vh; position: relative; overflow: hidden; }

/* title bar */
.titlebar { display: flex; height: 41px; background: #fdfdfd; border-top: 3px solid #9c3b2c; flex: none; }
.qat { display: flex; align-items: stretch; width: 450px; height: 30px; margin-top: 8px; background: linear-gradient(#a4a6a3, #858784); border-top: 1px solid #5a5c59; border-right: 1px solid #444; flex: none; }
.qb { width: 30px; }
.qb:first-child { margin-left: -6px; }
.qb .ic { width: 22px; height: 22px; }
.qb.light .ic { fill: #eee; stroke: #666; }
.caret { width: 12px; }
.qat .caret { width: 14px; }
.caret::after { content: ""; border: 3px solid transparent; border-top: 4px solid #444; border-bottom: 0; }
.wscombo { display: flex; align-items: center; flex: 1; margin-left: 3px; padding: 0 4px 0 3px; background: linear-gradient(#dcdddb, #b9bab8); border-left: 1px solid #555; font-size: 16px; }
.wscombo .ic { width: 22px; height: 22px; margin-right: 1px; }
.wscombo select { flex: 1; }
.wscombo .tri { border-top-color: #444; border-left-width: 5px; border-right-width: 5px; width: 10px; }
.qatmore { width: 20px; border-left: 1px solid #555; }
.titlebar h1 { margin: 9px 0 0; padding-left: 299px; font-size: 16px; line-height: 20px; font-weight: 400; white-space: nowrap; }
.titlebar h1 span { margin-left: 16px; font-size: 15px; }
.winmin { margin-left: auto; margin-right: 46px; width: 12px; height: 1px; background: #999; align-self: center; }
.winmax { width: 12px; height: 12px; border: 1px solid #888; margin-right: -7px; align-self: center; }

/* menus */
.menubar { display: flex; gap: 29px; height: 26px; padding-top: 2px; background: linear-gradient(#a2a4a1, #7c7e7b 45%, #5a5c59); border-top: 1px solid #444; color: #f4f4f2; white-space: nowrap; flex: none; }
.menubar a:first-child { margin-left: -28px; }

/* drawing file tabs */
.filetabs { display: flex; height: 33px; background: linear-gradient(#a0a39f, #939692); padding-top: 3px; flex: none; }
.ftab { height: 27px; color: #444; background: #8e908d; white-space: nowrap; }
.ftab:first-child { width: 122px; justify-content: flex-end; padding-right: 37px; border-radius: 0 12px 0 0; border-top: 1px solid #aaa; }
.ftab.active { width: 202px; justify-content: flex-start; padding-left: 17px; margin-left: -4px; color: #111; background: linear-gradient(#d3d4d2, #a4a6a3); clip-path: polygon(12px 0, 186px 0, 202px 100%, 0 100%); }
.ftab b { margin-left: 11px; font-size: 12px; color: #777; }
.fnew { width: 27px; height: 19px; margin: 6px 0 0 4px; border-radius: 2px 12px 4px 14px; background: #6f716e; border: 1px solid #555; color: #aaa; font-weight: 700; }

/* tool bars */
.toolbars { padding: 5px 0; display: flex; flex-direction: column; gap: 4px; background: #646762; flex: none; }
.trow { display: flex; height: 22px; }
.trow + .trow { height: 23px; }
.panel { display: flex; align-items: center; background: #eff0ed; outline: 1px solid #3d3f3c; flex: none; }
.std { margin-left: -18px; width: 637px; }
.tb { width: 23px; height: 22px; }
.sep { width: 6px; height: 20px; border-left: 1px solid #999; margin-left: 2px; margin-right: -2px; }
.grip { width: 10px; background: repeating-linear-gradient(90deg, transparent 0 2px, #333 2px 3px) 0 0/8px 100% no-repeat, #5b5d5a; }
.grp { width: 267px; padding-left: 2px; }
.refname { width: 138px; height: 20px; background: #f0f0ee; border-left: 1px solid #777; border-top: 1px solid #999; }
.combo { height: 100%; padding: 0 18px 0 4px; flex: 1; min-width: 0; background: #dfe1df url("data:image/svg+xml,%3Csvg xmlns='http://www.w3.org/2000/svg' width='10' height='6'%3E%3Cpath d='M1 1l4 4 4-4' fill='none' stroke='%23555'/%3E%3C/svg%3E") right 5px center no-repeat; }
.combo.inset { padding-left: 18px; }
.styles { width: 591px; align-self: stretch; }
.wsp { width: 147px; overflow: hidden; }
.wsp .combo { margin-left: -60px; padding-left: 4px; }
.lay { width: 392px; padding-left: 1px; }
.layercombo { display: flex; align-items: center; flex: 1; height: 100%; background: #dfe1df; padding-left: 2px; }
.layercombo .swatch { margin-left: 4px; }
.swatch { width: 10px; height: 10px; background: #0ff; border: 1px solid #222; }
.layercombo .combo { padding-left: 5px; background-color: transparent; }
.prop { width: 573px; font-family: "Liberation Mono", monospace; font-size: 13px; }
.pc { display: flex; align-items: center; height: 100%; background: #dfe1df; }
.pc .combo { background-color: transparent; }
.color { width: 150px; padding-left: 6px; }
.ltype { width: 162px; padding-left: 4px; }
.ltype .rule { width: 62px; }
.lweight { width: 126px; padding-left: 4px; }
.lweight .rule { width: 36px; }
.rule { height: 1px; background: #111; }
.pstyle { flex: 1; background: #c9cbc9; color: #888; padding-left: 4px; }
.pstyle .combo { background-image: none; opacity: 1; }

/* workspace */
.workspace { display: flex; flex: 1; border-bottom: 2px solid #222; }
.palette { width: 11px; border-top: 27px solid #9c9f9b; background: #eff0ed; margin-right: 4px; padding-top: 2px; overflow: hidden; flex: none; }
.palette ul { list-style: none; margin: 0 0 3px; padding: 0 0 1px; width: 11px; border-bottom: 1px solid #888; }
.palette ul:last-child { border: 0; margin: 0; padding: 0; }
.palette li { height: 19px; line-height: 19px; width: 15px; margin-left: -9px; font-size: 15px; }
.work { flex: 1; display: flex; flex-direction: column; min-width: 0; }
.upper { flex: 1; display: flex; }
.drawbar { width: 24px; margin: 1px 6px 0 0; align-self: flex-start; background: #eff0ed; border: 1px solid #4b4d4a; border-top: 0; flex: none; }
.drawbar button { width: 22px; height: 22px; }
.drawbar .ic { width: 16px; height: 16px; }
.hgrip { display: block; height: 8px; background: repeating-linear-gradient(90deg, #222 0 1px, #777 1px 3px); }
.doc { flex: 1; display: flex; flex-direction: column; min-width: 0; }
.doctabs { display: flex; height: 23px; background: #eff0ed; gap: 2px; }
.doctabs button { height: 22px; padding: 0 8px; border-right: 1px solid #333; font-size: 15px; background: #f6f6f4; }
.doctabs .on { color: #3418a8; background: #f4e8ee; border-left: 1px solid #444; border-right: 0; }
.canvas { position: relative; flex: 1; min-height: 400px; background: #000; border-top: 1px solid #8e908d; overflow: hidden; }
.drawing { position: absolute; inset: 0; width: 100%; height: 100%; }
.viewcube { position: absolute; right: 0; top: 10px; fill: #aaa; overflow: visible; }
.viewcube text { text-anchor: middle; }
.dir { font-size: 18px; fill: #b4b4b2; }
.top { font-size: 26px; fill: #4a4d4e; }
.wcs { font-size: 11px; fill: #6b6b75; }
.wall { stroke: #d0d2cc; }
.yel { stroke: #e6ec9a; }
.red { stroke: #a8142c; }
.bend { stroke-dasharray: 53 12 22 13 92 14 21 14 92; }
.run { stroke-dasharray: 92 14 21 14; stroke-dashoffset: 9; }
.tan { stroke: #e6c3a0; }
.pipes { stroke: #e6bd93; }
.white { stroke: #fff; }
.thin { stroke: #ddd; }
.lab { fill: #e6bd93; font-size: 13px; }

/* layout tabs */
.layout { display: flex; height: 21px; background: #eff0ed; }
.nav { display: flex; width: 74px; }
.nav button { flex: 1; border-right: 1px solid #aaa; }
.nav svg { width: 14px; height: 14px; fill: #555; stroke: #555; }
.lt { height: 20px; font-size: 14px; padding: 0 11px; position: relative; }
.lt.on { background: #000; color: #fff; width: 54px; padding: 0; clip-path: polygon(0 0, 100% 0, 48px 100%, 6px 100%); }
.lt:not(.on)::after { content: ""; position: absolute; right: 0; top: 0; height: 20px; border-right: 1px solid #333; transform: rotate(20deg); }
.hscroll { display: flex; margin-left: auto; width: 550px; height: 20px; }
.split { width: 6px; background: #c6c8c5; }
.hscroll button { width: 20px; }
.hscroll svg { width: 10px; height: 12px; fill: none; stroke: #333; stroke-width: 2; }
.thumb { width: 20px; background: #c9cbc9; margin-left: 328px; }

/* command line */
.command { display: flex; margin-top: 4px; height: 54px; }
.cmdgrip { width: 29px; background: linear-gradient(#70726f, #4a4c49); display: flex; flex-direction: column; align-items: center; gap: 4px; padding-top: 4px; }
.cmdgrip i { width: 24px; height: 9px; background: radial-gradient(#999 40%, transparent 45%) 0 0/3px 3px; }
.cmdgrip button { color: #fff; font-size: 14px; font-weight: 700; }
.cmdmain { flex: 1; display: flex; flex-direction: column; }
.history { height: 27px; background: #c8cac7; border-bottom: 1px solid #777; }
.prompt { flex: 1; display: flex; align-items: center; background: #fefefe; padding-left: 5px; }
.prompt .tri { border-top-color: #777; margin-left: -2px; }
.prompt input { flex: 1; margin-left: 9px; font-size: 20px; font-style: italic; font-weight: 300; outline: 0; }
.prompt input::placeholder { color: #999; }

/* status bar */
.status { display: flex; align-items: center; height: 30px; border-bottom: 8px solid #d5d7d6; background: linear-gradient(#989a97, #767875); padding-left: 9px; flex: none; }
.coords { width: 145px; height: 22px; margin-left: 4px; padding-left: 8px; background: #8b8d8a; font: 13px/24px "Liberation Mono", monospace; white-space: pre; overflow: hidden; }
.sgroup { display: flex; }
.sgroup button { width: 22px; height: 22px; background: linear-gradient(#c0c2bf, #a4a6a3); border-right: 1px solid #777; }
.sgroup .on { background: linear-gradient(#d9eef1, #a3cdd5); }
.sgroup .ic { width: 17px; height: 17px; stroke: #333; }
.right { margin-left: auto; }
.sgroup .txt { width: 36px; font-size: 14px; white-space: nowrap; }
.sgroup .wide { width: 65px; }
.sgroup .scale { width: 60px; gap: 3px; font: 14px/20px "Liberation Mono", monospace; }
.gap { width: 22px; }
.gap.thin { width: 7px; background: #666; }

/* task bar */
.taskbar { display: flex; height: 50px; background: #1c2d2c; color: #eef3f2; gap: 10px; flex: none; }
.cortana { width: 20px; }
.cortana svg { margin-left: -10px; }
.tview { width: 34px; margin: 0 12px 0 10px; }
.taskbar .task { width: 190px; border-bottom: 3px solid #dfbd87; justify-content: flex-start; padding-left: 7px; gap: 4px; white-space: nowrap; }
.taskbar .latin { font-size: 16px; }
.taskbar .task svg { width: 30px; height: 30px; flex: none; }
.taskbar .active { width: 200px; margin-left: -4px; padding-left: 12px; background: #4a5755; }
.tray { display: flex; align-items: center; margin-left: auto; }
.ime { margin-left: -12px; width: 26px; }
.clock { width: 56px; display: flex; flex-direction: column; line-height: 23px; white-space: nowrap; }
.clock span:first-child { margin-left: 13px; }

/* channel mark laid over the recording */
.mark { position: absolute; right: 0; bottom: 0; width: 175px; height: 162px; overflow: hidden; pointer-events: none; }
.mark svg { position: absolute; right: 0; top: 0; }
.mark p { position: absolute; left: 0; top: 98px; margin: 0; font: 900 41px/48px "Noto Sans CJK SC", sans-serif; color: #0f8f80; white-space: nowrap; }
```
